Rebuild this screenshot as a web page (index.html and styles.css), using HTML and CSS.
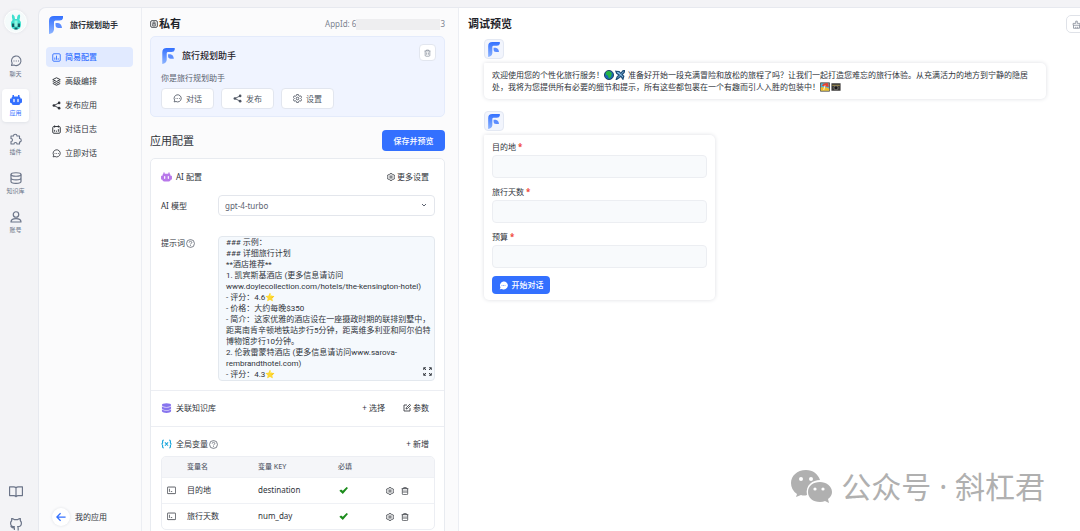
FILE: index.html
```html
<!DOCTYPE html>
<html lang="zh-CN">
<head>
<meta charset="utf-8">
<meta name="viewport" content="width=device-width, initial-scale=1">
<title>旅行规划助手</title>
<link rel="stylesheet" href="styles.css">
</head>
<body>
<svg class="defs" aria-hidden="true">
  <defs>
    <linearGradient id="lg" x1="0" y1="0" x2="0" y2="1"><stop offset="0" stop-color="#3370ff"/><stop offset="1" stop-color="#8db4ff"/></linearGradient>
    <symbol id="logo" viewBox="0 0 28 36"><path d="M0 36V10Q0 0 10 0H28V4Q27 9 21 9H13Q10 9 10 12V27Q9 35 0 36Z" fill="url(#lg)"/><path d="M13 14H18Q25 15 26 24H19Q13 24 13 18Z" fill="#5c8dff"/></symbol>
    <symbol id="chat" viewBox="0 0 24 24"><path d="M3 21l1.300-4.500A9.500 9.500 0 1 1 8 20Z" fill="none" stroke="currentColor" stroke-width="2.200" stroke-linejoin="round"/><path d="M7 12h2M11.500 12h2M16 12h2" stroke="currentColor" stroke-width="2.200"/></symbol>
    <symbol id="bot" viewBox="0 0 24 22"><path d="M5 4V1h3v3h8V1h3v3q2 1 2 4h2q1 0 1 2v5q0 2-2 2h-1q0 4-4 4H7q-4 0-4-4H2q-2 0-2-2v-5q0-2 1-2h2q0-3 2-4Z" fill="currentColor"/><path d="M8 10v4M16 10v4" stroke="#fff" stroke-width="2.600" stroke-linecap="round"/></symbol>
    <symbol id="plugin" viewBox="0 0 24 24"><path d="M7 6a3.500 3.500 0 0 1 7 0h5v5a3.500 3.500 0 0 1 0 7v4h-5a3 3 0 0 0-6 0H2v-5a3 3 0 0 0 0-6V6Z" fill="none" stroke="currentColor" stroke-width="2.200" stroke-linejoin="round"/></symbol>
    <symbol id="db" viewBox="0 0 24 24"><g fill="none" stroke="currentColor" stroke-width="2.400"><ellipse cx="12" cy="5" rx="10" ry="3.500"/><path d="M2 5v14c0 5 20 5 20 0V5M2 12c0 5 20 5 20 0"/></g></symbol>
    <symbol id="user" viewBox="0 0 24 24"><g fill="none" stroke="currentColor" stroke-width="2.400"><circle cx="12" cy="7" r="5.500"/><path d="M2 22c0-9 20-9 20 0Z" stroke-linejoin="round"/></g></symbol>
    <symbol id="book" viewBox="0 0 24 20"><path d="M12 4Q11 2 8 2H1v15h7q3 0 4 2 1-2 4-2h7V2h-7q-3 0-4 2v15" fill="none" stroke="currentColor" stroke-width="2" stroke-linejoin="round"/></symbol>
    <symbol id="git" viewBox="0 0 24 24"><path d="M9 22v-4c-5 1-5-2-7-3M16 23v-4c0-1 0-2-1-3 4 0 7-2 7-7 0-1-1-3-2-4V1c-2 0-4 1-5 2H9C8 2 6 1 4 1v4C3 6 2 8 2 9c0 5 3 7 7 7-1 1-1 2-1 3" fill="none" stroke="currentColor" stroke-width="2.200" stroke-linejoin="round"/></symbol>
    <symbol id="chart" viewBox="0 0 24 24"><rect x="2" y="2" width="20" height="20" rx="3" fill="none" stroke="currentColor" stroke-width="2.400"/><path d="M7.500 18v-6M12 18V7M16.500 18v-4" stroke="currentColor" stroke-width="2.400"/></symbol>
    <symbol id="layers" viewBox="0 0 24 24"><path d="M12 2l10 5-10 5L2 7ZM2 12l10 5 10-5M2 17l10 5 10-5" fill="none" stroke="currentColor" stroke-width="2.600" stroke-linejoin="round"/></symbol>
    <symbol id="share" viewBox="0 0 24 24"><path d="M19 5L5 12l14 7" fill="none" stroke="currentColor" stroke-width="2.400"/><g fill="currentColor"><circle cx="19" cy="5" r="3.500"/><circle cx="5" cy="12" r="3.500"/><circle cx="19" cy="19" r="3.500"/></g></symbol>
    <symbol id="log" viewBox="0 0 24 24"><rect x="2" y="4" width="20" height="18" rx="3" fill="none" stroke="currentColor" stroke-width="2.600"/><path d="M7 1v6M17 1v6M7 18v-5M12 18v-3M17 18v-7" stroke="currentColor" stroke-width="2.400"/></symbol>
    <symbol id="gear" viewBox="0 0 24 24"><path d="M9.500 1.500h5l1 3.500 2 1 3.500-1 2 4-2.500 3 2.500 3-2 4-3.500-1-2 1-1 3.500h-5l-1-3.500-2-1-3.500 1-2-4L3.500 12 1 9l2-4 3.500 1 2-1Z" fill="none" stroke="currentColor" stroke-width="2.200" stroke-linejoin="round"/><circle cx="12" cy="12" r="3.500" fill="none" stroke="currentColor" stroke-width="2.400"/></symbol>
    <symbol id="trash" viewBox="0 0 24 24"><path d="M2 5h20M8 5V2h8v3M4 5v15q0 3 3 3h10q3 0 3-3V5M9 10v8M15 10v8" fill="none" stroke="currentColor" stroke-width="2.300"/></symbol>
    <symbol id="help" viewBox="0 0 24 24"><circle cx="12" cy="12" r="10.500" fill="none" stroke="currentColor" stroke-width="2"/><path d="M8.500 9.500c0-5 7-4 7-.5 0 3-3.500 2.500-3.500 5.500M12 16.500V19" fill="none" stroke="currentColor" stroke-width="2"/></symbol>
    <symbol id="edit" viewBox="0 0 24 24"><path d="M12 3H3v18h18v-9M9 15l1-4L20 1l3 3-10 10Z" fill="none" stroke="currentColor" stroke-width="2.500"/></symbol>
    <symbol id="textbox" viewBox="0 0 26 22"><rect x="1" y="1" width="24" height="19" rx="2" fill="none" stroke="currentColor" stroke-width="2.200"/><path d="M7 6v9M11 14h4" stroke="currentColor" stroke-width="2"/></symbol>
    <symbol id="check" viewBox="0 0 26 22"><path d="M1 12l5-4 5 4L22 1l4 3-15 17Z" fill="#1c8c1c"/></symbol>
  </defs>
</svg>
<div class="app">
  <nav class="rail">
    <div class="avatar"><svg viewBox="0 0 24 32"><path d="M5 12Q2 0 6 1q4 2 4 9h4q0-8 4-9 4-1 1 11 4 3 3 10-1 9-10 9T2 22Q1 15 5 12Z" fill="#3fe0cf"/><path d="M4 19h5v7H4ZM15 19h5v7h-5ZM9 27h6v4H9Z" fill="#145d63"/><path d="M9 13h6v12H9Z" fill="#8df4df"/></svg></div>
    <a class="rail-item" href="#"><svg><use href="#chat"/></svg>聊天</a>
    <a class="rail-item active" href="#"><svg><use href="#bot"/></svg>应用</a>
    <a class="rail-item" href="#"><svg><use href="#plugin"/></svg>插件</a>
    <a class="rail-item" href="#"><svg><use href="#db"/></svg>知识库</a>
    <a class="rail-item" href="#"><svg><use href="#user"/></svg>账号</a>
    <div class="rail-foot">
      <a href="#" aria-label="文档"><svg><use href="#book"/></svg></a>
      <a href="#" aria-label="GitHub"><svg><use href="#git"/></svg></a>
    </div>
  </nav>
  <main class="main">
    <aside class="side">
      <div class="side-head"><svg class="logo"><use href="#logo"/></svg>旅行规划助手</div>
      <a class="menu active" href="#"><svg><use href="#chart"/></svg>简易配置</a>
      <a class="menu" href="#"><svg><use href="#layers"/></svg>高级编排</a>
      <a class="menu" href="#"><svg><use href="#share"/></svg>发布应用</a>
      <a class="menu" href="#"><svg><use href="#log"/></svg>对话日志</a>
      <a class="menu" href="#"><svg><use href="#chat"/></svg>立即对话</a>
      <a class="back" href="#"><span class="back-dot"><svg viewBox="0 0 24 24"><path d="M23 12H3M11 3l-9 9 9 9" fill="none" stroke="#3370ff" stroke-width="3"/></svg></span>我的应用</a>
    </aside>
    <section class="config">
      <header class="config-head">
        <svg class="lock" viewBox="0 0 24 24"><rect x="2" y="2" width="20" height="20" rx="4" fill="none" stroke="currentColor" stroke-width="2.500"/><path d="M8 11h8v7H8ZM9 11V6h6v5M12 13v3" fill="none" stroke="currentColor" stroke-width="2"/></svg>
        <h2>私有</h2>
        <span class="appid">AppId: 6<i class="mask"></i>3</span>
      </header>
      <div class="hero">
        <div class="hero-top"><svg class="logo"><use href="#logo"/></svg><h3>旅行规划助手</h3><button class="del" aria-label="删除"><svg><use href="#trash"/></svg></button></div>
        <p>你是旅行规划助手</p>
        <div class="hero-actions">
          <button class="btn"><svg><use href="#chat"/></svg>对话</button>
          <button class="btn"><svg><use href="#share"/></svg>发布</button>
          <button class="btn"><svg><use href="#gear"/></svg>设置</button>
        </div>
      </div>
      <div class="conf-title"><h2>应用配置</h2><button class="primary">保存并预览</button></div>
      <div class="panel">
        <div class="block">
          <div class="row"><svg class="ic purple"><use href="#bot"/></svg><span>AI 配置</span><button class="link"><svg><use href="#gear"/></svg>更多设置</button></div>
          <div class="field">
            <label for="model">AI 模型</label>
            <div class="select-wrap"><select id="model"><option>gpt-4-turbo</option></select><svg class="chev" viewBox="0 0 12 8"><path d="M2 2l4 4 4-4" fill="none" stroke="currentColor" stroke-width="2"/></svg></div>
          </div>
          <div class="field prompt">
            <label for="prompt">提示词<svg class="help"><use href="#help"/></svg></label>
            <div class="area-wrap">
              <textarea id="prompt" spellcheck="false">
### 示例：
### 详细旅行计划
**酒店推荐**
1. 凯宾斯基酒店 (更多信息请访问
www.doylecollection.com/hotels/the-kensington-hotel)
- 评分：4.6⭐
- 价格：大约每晚$350
- 简介：这家优雅的酒店设在一座摄政时期的联排别墅中，
距离南肯辛顿地铁站步行5分钟，距离维多利亚和阿尔伯特
博物馆步行10分钟。
2. 伦敦雷蒙特酒店 (更多信息请访问www.sarova-
rembrandthotel.com)
- 评分：4.3⭐</textarea>
              <svg class="expand" viewBox="0 0 24 24"><path d="M2 8V2h6M2 2l6 6M16 2h6v6M22 2l-6 6M2 16v6h6M2 22l6-6M16 22h6v-6M22 22l-6-6" fill="none" stroke="currentColor" stroke-width="2.500"/></svg>
            </div>
          </div>
        </div>
        <div class="block slim">
          <div class="row"><svg class="ic violet" viewBox="0 0 24 24"><g fill="currentColor"><ellipse cx="12" cy="5" rx="11" ry="4.500"/><path d="M1 8c2 4 20 4 22 0v5c-2 5-20 5-22 0Z"/><path d="M1 15c2 4 20 4 22 0v5c-2 5-20 5-22 0Z"/></g></svg><span>关联知识库</span><button class="link">+ 选择</button><button class="link next"><svg><use href="#edit"/></svg>参数</button></div>
        </div>
        <div class="block vars">
          <div class="row"><svg class="ic cyan" viewBox="0 0 28 24"><path d="M7 2Q4 2 4 5v4q0 3-3 3 3 0 3 3v4q0 3 3 3M21 2q3 0 3 3v4q0 3 3 3-3 0-3 3v4q0 3-3 3M10 8l8 8M18 8l-8 8" fill="none" stroke="currentColor" stroke-width="3"/></svg><span>全局变量</span><svg class="help"><use href="#help"/></svg><button class="link">+ 新增</button></div>
          <div class="table-wrap">
          <table>
            <thead><tr><th class="c-icon"></th><th class="c-name">变量名</th><th class="c-key">变量 KEY</th><th class="c-req">必填</th><th></th></tr></thead>
            <tbody>
              <tr><td class="c-icon"><svg><use href="#textbox"/></svg></td><td>目的地</td><td>destination</td><td><svg class="check"><use href="#check"/></svg></td><td class="acts"><button aria-label="编辑目的地"><svg><use href="#gear"/></svg></button><button aria-label="删除目的地"><svg><use href="#trash"/></svg></button></td></tr>
              <tr><td class="c-icon"><svg><use href="#textbox"/></svg></td><td>旅行天数</td><td>num_day</td><td><svg class="check"><use href="#check"/></svg></td><td class="acts"><button aria-label="编辑旅行天数"><svg><use href="#gear"/></svg></button><button aria-label="删除旅行天数"><svg><use href="#trash"/></svg></button></td></tr>
            </tbody>
          </table>
          </div>
        </div>
      </div>
    </section>
    <section class="preview">
      <header class="preview-head"><h2>调试预览</h2><button class="clear" aria-label="清空"><svg viewBox="0 0 24 24"><path d="M10 9V3h4v6h7v5H3V9ZM4 14v8h16v-8M10 22v-4M15 22v-4" fill="none" stroke="currentColor" stroke-width="2"/></svg></button></header>
      <div class="chat">
        <div class="bot-icon"><svg class="logo"><use href="#logo"/></svg></div>
        <div class="bubble">欢迎使用您的个性化旅行服务！<svg class="emoji" viewBox="0 0 24 24"><circle cx="12" cy="12" r="11" fill="#1769b5" stroke="#16334f" stroke-width="2"/><path d="M5 5q5-4 9-2l5 5-2 8-5 5-3-8-5-2Z" fill="#27b343"/></svg><svg class="emoji" viewBox="0 0 24 24"><path d="M2 3l8 1 4 4 5-6 4-1-1 5-5 5 4 4-2 7-5-7-6 5-5 3 2-6 5-5-6-4Z" fill="#8fc4ec" stroke="#1f4d77" stroke-width="3"/></svg> 准备好开始一段充满冒险和放松的旅程了吗？让我们一起打造您难忘的旅行体验。从充满活力的地方到宁静的隐居处，我将为您提供所有必要的细节和提示，所有这些都包裹在一个有趣而引人入胜的包装中！<svg class="emoji" viewBox="0 0 24 24"><path d="M1 2h22v20H1Z" fill="#4fb4d8" stroke="#5b4635" stroke-width="2"/><path d="M2 21V13q12-3 20 3v5Z" fill="#f6bd25"/><path d="M4 9Q8 1 20 3l1 9Z" fill="#e6412f"/><path d="M12 8l-3 11" stroke="#fff" stroke-width="2"/></svg><svg class="emoji" viewBox="0 0 24 24"><path d="M1 3h22v18H1Z" fill="#3b3a39"/><path d="M3 8h18" stroke="#b7a14a" stroke-width="2"/><circle cx="12" cy="14" r="5" fill="#171717" stroke="#85827d" stroke-width="2"/></svg></div>
        <div class="bot-icon second"><svg class="logo"><use href="#logo"/></svg></div>
        <form class="form">
          <label for="f1">目的地<b>*</b></label><input id="f1" type="text">
          <label for="f2">旅行天数<b>*</b></label><input id="f2" type="text">
          <label for="f3">预算<b>*</b></label><input id="f3" type="text">
          <button class="primary start" type="button"><svg viewBox="0 0 24 24"><path d="M2 22l2-5A10.500 10.500 0 1 1 8 21Z" fill="#fff"/><path d="M7 12h2M11 12h2M15 12h2" stroke="#3370ff" stroke-width="2"/></svg>开始对话</button>
        </form>
      </div>
    </section>
  </main>
  <div class="watermark"><svg viewBox="0 0 41 34"><path d="M15 0C6 0 0 6 0 13q0 7 6 11l-1 3 5-2q3 1 6 0C14 15 22 10 29 10 27 4 22 0 15 0Z" fill="#b0b0b0"/><path d="M29 12c-7 0-12 4-12 10s5 10 12 10q3 0 5-1l4 2-1-4q4-3 4-7c0-6-6-10-12-10Z" fill="#b0b0b0"/><g fill="#fff"><circle cx="10" cy="9" r="2"/><circle cx="20" cy="9" r="2"/><circle cx="24" cy="19" r="1.600"/><circle cx="32" cy="19" r="1.600"/></g></svg><span>公众号 · 斜杠君</span></div>
</div>
</body>
</html>
```
FILE: styles.css
```css
* { box-sizing: border-box; }
body { margin: 0; background: #f3f3f6; color: #30343b; font: 8px/12px "Noto Sans", "Noto Sans CJK SC", sans-serif; }
h2, h3, p { margin: 0; }
svg { display: block; width: 9px; height: 9px; flex: none; }
a { color: inherit; text-decoration: none; }
button { display: flex; align-items: center; justify-content: center; padding: 0; border: 0; background: none; color: inherit; font: inherit; }
input, select, textarea { font: inherit; color: inherit; }
.defs { position: absolute; width: 0; height: 0; }
.app { position: relative; display: flex; height: 100vh; overflow: hidden; }

.rail { flex: none; width: 38px; padding: 10px 0 0 2px; display: flex; flex-direction: column; gap: 6px; color: #6b7488; }
.avatar { width: 23px; height: 23px; margin: 0 2px 11px; border-radius: 50%; background: #f4fbfb; border: 1px solid #fff; box-shadow: 0 0 3px #e0e3e8; display: grid; place-items: center; }
.avatar svg { width: 12px; height: 16px; }
.rail-item { width: 27px; height: 33px; padding-top: 5px; border-radius: 4px; display: flex; flex-direction: column; align-items: center; gap: 1px; font-size: 6px; white-space: nowrap; }
.rail-item svg { width: 12px; height: 12px; }
.rail-item.active { background: #fff; color: #3370ff; box-shadow: 0 1px 3px #dfe2e8; }
.rail-foot { margin-top: auto; width: 27px; display: flex; flex-direction: column; align-items: center; gap: 20px; }
.rail-foot svg { width: 14px; height: 13px; }

.main { flex: 1; min-width: 0; margin-top: 7px; display: flex; background: #fbfbfc; border: solid #e7e9ef; border-width: 1px 0 0 1px; border-radius: 8px 0 0 0; overflow: hidden; }
.side { flex: none; width: 103px; padding: 7px 8px 5px 7px; display: flex; flex-direction: column; gap: 4px; border-right: 1px solid #eceef3; }
.logo { width: 14px; height: 18px; }
.side-head { display: flex; align-items: center; gap: 7px; height: 20px; margin-bottom: 8px; padding-left: 3px; font-weight: 700; }
.menu { display: flex; align-items: center; gap: 4px; height: 20px; padding-left: 6px; border-radius: 4px; }
.menu.active { background: #e1eaff; color: #3370ff; font-weight: 500; }
.back { display: flex; align-items: center; gap: 5px; margin-top: auto; padding-left: 6px; }
.back-dot { display: grid; place-items: center; width: 18px; height: 18px; border-radius: 50%; background: #fff; box-shadow: 0 0 3px #dcdfe5; }
.back-dot svg { width: 10px; height: 10px; }

.config { flex: 0 0 317px; padding: 8px 13px 0 8px; border-right: 1px solid #eceef3; overflow: hidden; }
.config-head { display: flex; align-items: center; height: 16px; margin-bottom: 4px; gap: 1px; }
h2 { font-size: 11px; line-height: 16px; color: #1f2329; }
.lock { width: 8px; height: 8px; }
.appid { margin-left: auto; display: flex; align-items: center; color: #7d8491; }
.mask { width: 84px; height: 11px; background: #eeeef0; }
.hero { height: 81px; padding: 7px 8px 8px 10px; border: 1px solid #e4ebfb; border-radius: 5px; background: #f0f4ff; }
.hero-top { display: flex; align-items: flex-start; gap: 7px; height: 28px; }
.hero-top .logo { width: 13px; height: 16px; margin: 4px 0 0 1px; }
h3 { margin-top: 5px; font-size: 9px; line-height: 14px; font-weight: 500; color: #1f2329; }
.del { width: 17px; height: 17px; margin-left: auto; border-radius: 4px; background: #fff; border: 1px solid #e2e6ef; color: #7d8491; }
.del svg { width: 7px; height: 8px; }
.hero p { color: #5c6370; }
.hero-actions { display: flex; gap: 7px; margin-top: 4px; }
.btn { width: 53px; height: 21px; gap: 4px; border: 1px solid #e2e6ef; border-radius: 4px; background: #fff; color: #4e5562; }
.conf-title { display: flex; align-items: center; justify-content: space-between; margin: 13px 0 7px; }
.conf-title h2 { font-weight: 400; color: #30343b; }
.primary { width: 63px; height: 21px; border-radius: 4px; background: #3370ff; color: #fff; font-weight: 500; }

.panel { border: 1px solid #e8ebf0; border-radius: 5px; background: #fff; }
.block { padding: 12px 9px 9px 10px; border-bottom: 1px solid #eceef3; }
.block.slim { padding: 11px 9px 12px 10px; }
.block.vars { padding-top: 11px; border-bottom: 0; }
.row { display: flex; align-items: center; height: 12px; padding-right: 6px; }
.row > span { margin-left: 4px; }
.ic { width: 11px; height: 10px; }
.purple { color: #b878ea; }
.violet { color: #8774ee; }
.cyan { color: #1da7dc; }
.help { margin-left: 1px; color: #555c68; }
.link { margin-left: auto; gap: 2px; white-space: nowrap; }
.link svg { width: 8px; height: 8px; }
.link.next { margin-left: 18px; }
.field { display: flex; align-items: center; margin-top: 12px; }
.field label { width: 57px; display: flex; align-items: center; }
.select-wrap, .area-wrap { position: relative; flex: 1; min-width: 0; }
select { display: block; width: 100%; height: 21px; padding: 0 6px; appearance: none; border: 1px solid #e3e6ec; border-radius: 4px; background: #fff; color: #5c6370; }
.chev { position: absolute; right: 8px; top: 8px; width: 6px; height: 4px; color: #5c6370; }
.field.prompt { align-items: flex-start; margin-top: 20px; }
.prompt label { margin-top: 1px; }
textarea { display: block; width: 100%; height: 145px; padding: 0 0 0 7px; resize: none; overflow: hidden; border: 1px solid #e3e8ee; border-radius: 4px; background: #f5f9fd; font-family: Roboto, "Noto Sans CJK SC", sans-serif; line-height: 11px; }
.expand { position: absolute; right: 3px; bottom: 5px; }

.table-wrap { margin-top: 6px; border: 1px solid #eceef3; border-radius: 5px; overflow: hidden; }
table { width: 100%; border-collapse: collapse; table-layout: fixed; }
th { height: 20px; padding: 0; background: #f5f6f9; font-size: 7px; font-weight: 500; text-align: left; color: #5c6370; }
td { height: 26px; padding: 0; border-top: 1px solid #eff1f5; }
.c-icon { width: 25px; padding-left: 5px; }
.c-name { width: 71px; }
.c-key { width: 80px; }
.c-req { width: 48px; }
.check { margin-left: 1px; }
.acts button { display: inline-flex; margin-right: 7px; vertical-align: middle; }
.acts svg { width: 8px; height: 8px; }

.preview { flex: 1; min-width: 0; background: #fff; padding: 8px 34px 0 9px; }
.preview-head { display: flex; align-items: center; justify-content: space-between; height: 16px; margin-right: -40px; }
.clear { width: 20px; height: 18px; border: 1px solid #dfe2e8; border-radius: 5px; color: #7d8491; }
.chat { padding: 7px 0 0 16px; }
.bot-icon { display: grid; place-items: center; width: 20px; height: 20px; border: 1px solid #e3e8f3; border-radius: 4px; background: #f2f5fd; }
.bot-icon .logo { width: 12px; height: 15px; }
.bot-icon.second { margin-top: 12px; }
.bubble, .form { margin-top: 4px; background: #fff; border-radius: 1px 5px 5px 5px; box-shadow: 0 0 4px #dcdee3; }
.bubble { padding: 6px 8px; }
.emoji { display: inline-block; width: 10px; height: 10px; margin-right: 1px; vertical-align: -2px; }
.form { width: 231px; padding: 6px 8px; }
.form label { display: block; height: 14px; }
.form b { margin-left: 2px; color: #f04438; }
.form input { display: block; width: 100%; height: 23px; margin-bottom: 8px; border: 1px solid #eceef2; border-radius: 4px; background: #f8fafc; }
.start { width: 58px; height: 18px; gap: 4px; }

.watermark { position: absolute; right: 35px; bottom: 26px; display: flex; align-items: center; gap: 9px; color: #b0b0b0; font-size: 30px; line-height: 36px; }
.watermark svg { width: 41px; height: 34px; }
```
